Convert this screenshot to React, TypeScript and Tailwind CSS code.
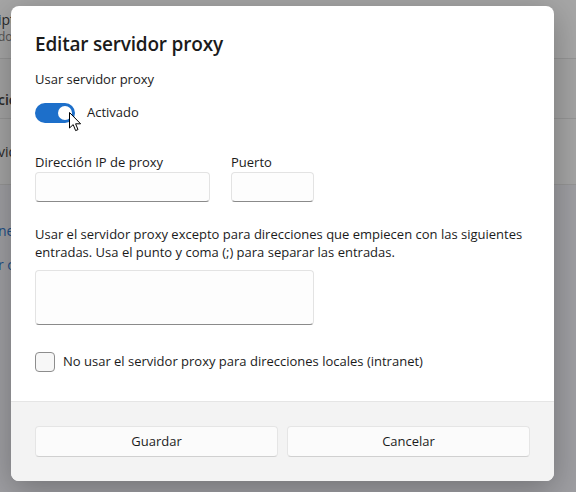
import type { ReactNode } from "react";

function Backdrop() {
  return (
    <div className="flex h-full w-full flex-col bg-[#9e9ea2] text-[14px] text-[#2a2a2a]">
      <div className="flex h-[58px] flex-col bg-[#a6a6a6] pl-0 pt-[10px]">
        <span className="-ml-[2px] leading-[20px]">ipt</span>
        <span className="-ml-[2px] text-[12px] leading-[14px] text-[#555]">do</span>
      </div>
      <div className="flex h-[60px] items-end border-t border-[#959595] bg-[#a3a3a3] pb-[8px]">
        <span className="-ml-[2px] font-semibold">ción</span>
      </div>
      <div className="flex h-[67px] items-center border-y border-[#959595] bg-[#a4a4a4]">
        <span className="-ml-[2px]">vidor</span>
      </div>
      <div className="flex flex-col gap-[13px] pt-[35px] text-[#1f4f86]">
        <span className="-ml-[2px]">nes</span>
        <span className="-ml-[2px]">r com</span>
      </div>
    </div>
  );
}

function TextBox({ className }: { className: string }) {
  return (
    <div
      className={`rounded-[4px] border border-[#e3e3e3] border-b-[#8a8a8a] bg-[#fdfdfd] ${className}`}
    />
  );
}

function Button({ children }: { children: ReactNode }) {
  return (
    <button
      type="button"
      className="h-[31px] flex-1 rounded-[4px] border border-[#e5e5e5] border-b-[#d0d0d0] bg-[#fbfbfb] text-[13px] text-[#1b1b1b]"
    >
      {children}
    </button>
  );
}

function Cursor() {
  return (
    <svg
      className="absolute left-[69px] top-[112px]"
      width="13"
      height="21"
      viewBox="0 0 13 21"
    >
      <path
        d="M0.5 0.5 L0.5 16 L4.2 12.6 L6.6 18.6 L9 17.6 L6.6 11.8 L11.6 11.8 Z"
        fill="#fff"
        stroke="#000"
        strokeWidth="1"
        strokeLinejoin="round"
      />
    </svg>
  );
}

function Dialog() {
  return (
    <div className="absolute left-[11px] top-[6px] flex h-[475px] w-[543px] flex-col overflow-hidden rounded-[8px] bg-white shadow-[0_8px_32px_rgba(0,0,0,0.28)]">
      <div className="flex flex-1 flex-col px-6 pt-[24px]">
        <h1 className="text-[19px] font-semibold leading-[28px] tracking-[-0.2px] text-[#1b1b1b]">
          Editar servidor proxy
        </h1>
        <p className="mt-[11px] text-[13px] leading-[20px] text-[#1b1b1b]">
          Usar servidor proxy
        </p>
        <div className="mt-[14px] flex items-center gap-[12px]">
          <div className="flex h-[20px] w-[40px] items-center justify-end rounded-full bg-[#1d6fca] pr-[3px]">
            <div className="h-[14px] w-[14px] rounded-full bg-white" />
          </div>
          <span className="text-[13px] text-[#1b1b1b]">Activado</span>
        </div>
        <div className="mt-[29px] flex gap-[21px] text-[13px] text-[#1b1b1b]">
          <div className="flex flex-col">
            <span className="leading-[20px]">Dirección IP de proxy</span>
            <TextBox className="h-[30px] w-[175px]" />
          </div>
          <div className="flex flex-col">
            <span className="leading-[20px]">Puerto</span>
            <TextBox className="h-[30px] w-[83px]" />
          </div>
        </div>
        <p className="mt-[23px] text-[13px] leading-[18px] text-[#1b1b1b]">
          Usar el servidor proxy excepto para direcciones que empiecen con las siguientes
          entradas. Usa el punto y coma (;) para separar las entradas.
        </p>
        <TextBox className="mt-[9px] h-[55px] w-[279px]" />
        <label className="mt-[27px] flex items-center gap-[8px] text-[13px] text-[#1b1b1b]">
          <span className="h-[20px] w-[20px] rounded-[4px] border border-[#8d8d8d] bg-[#f7f7f7]" />
          No usar el servidor proxy para direcciones locales (intranet)
        </label>
      </div>
      <div className="flex h-[80px] items-center gap-[9px] border-t border-[#e5e5e5] bg-[#f3f3f3] px-6">
        <Button>Guardar</Button>
        <Button>Cancelar</Button>
      </div>
    </div>
  );
}

export default function App() {
  return (
    <div className="relative h-[492px] w-[576px] overflow-hidden font-['Open_Sans',sans-serif]">
      <Backdrop />
      <Dialog />
      <Cursor />
    </div>
  );
}
